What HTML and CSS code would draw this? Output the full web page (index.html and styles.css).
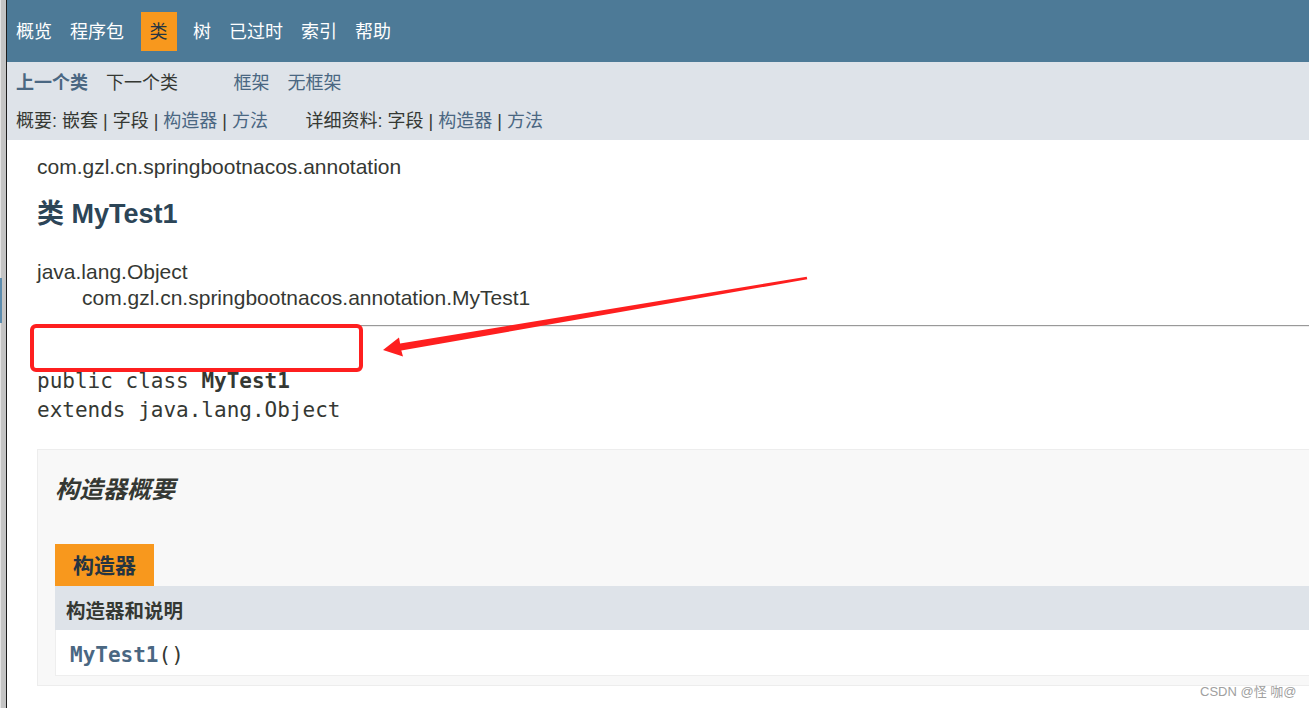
FILE: index.html
```html
<!DOCTYPE html>
<html lang="zh-CN">
<head>
<meta charset="utf-8">
<title>MyTest1</title>
<link rel="stylesheet" href="styles.css">
</head>
<body>
<div class="frame">
  <div class="edge"></div>
  <div class="page">
    <div class="topnav">
      <ul class="navlist">
        <li>概览</li>
        <li>程序包</li>
        <li class="active">类</li>
        <li>树</li>
        <li>已过时</li>
        <li>索引</li>
        <li>帮助</li>
      </ul>
    </div>
    <div class="subnav">
      <div class="subrow row1">
        <ul class="sublist">
          <li><a class="strong">上一个类</a></li>
          <li>下一个类</li>
        </ul>
        <ul class="sublist">
          <li><a>框架</a></li>
          <li><a>无框架</a></li>
        </ul>
      </div>
      <div class="subrow row2">
        <span class="group">概要:&nbsp;嵌套&nbsp;|&nbsp;字段&nbsp;|&nbsp;<a>构造器</a>&nbsp;|&nbsp;<a>方法</a></span>
        <span class="group">详细资料:&nbsp;字段&nbsp;|&nbsp;<a>构造器</a>&nbsp;|&nbsp;<a>方法</a></span>
      </div>
    </div>
    <div class="header">
      <div class="subtitle">com.gzl.cn.springbootnacos.annotation</div>
      <h2 class="title">类 MyTest1</h2>
    </div>
    <div class="content">
      <div class="inheritance">
        <div>java.lang.Object</div>
        <div class="inherit-child">com.gzl.cn.springbootnacos.annotation.MyTest1</div>
      </div>
      <hr class="rule">
      <pre class="decl">public class <b>MyTest1</b>
extends java.lang.Object</pre>
      <div class="summary">
        <h3 class="summary-title">构造器概要</h3>
        <div class="table">
          <div class="tab">构造器</div>
          <div class="thead">构造器和说明</div>
          <div class="trow"><code><a class="member">MyTest1</a>()</code></div>
        </div>
      </div>
    </div>
  </div>
</div>
<svg class="annot" width="1309" height="708" viewBox="0 0 1309 708" xmlns="http://www.w3.org/2000/svg">
  <rect x="32" y="326" width="329" height="44" rx="4" ry="4" fill="none" stroke="#fe1f1f" stroke-width="4"/>
  <polygon fill="#fe1f1f" points="383,350 403,356.5 401.3,350.6 807.3,279.2 806.7,276.8 400.1,343.4 399,337.6"/>
</svg>
<div class="watermark">CSDN @怪 咖@</div>
</body>
</html>
```

FILE: styles.css
```css
html, body {
  margin: 0;
  padding: 0;
}
body {
  width: 1309px;
  height: 708px;
  overflow: hidden;
  position: relative;
  background: #ffffff;
  color: #353833;
  font-family: "Liberation Sans", "Noto Sans CJK SC", Arial, sans-serif;
  font-size: 21px;
}
a {
  color: #4A6782;
  text-decoration: none;
}
.frame {
  display: flex;
  height: 708px;
}
.edge {
  width: 7px;
  flex: none;
  background:
    linear-gradient(to bottom, transparent 0 278px, #5c8cae 278px 323px, transparent 323px) 0 0 / 2px 100% no-repeat,
    linear-gradient(to right, #e4e4e4 0 1px, #c4c4c4 1px 6px, #1c1c1c 6px 7px);
}
.page {
  flex: 1;
  min-width: 0;
}

/* top navigation */
.topnav {
  height: 62px;
  box-sizing: border-box;
  padding-top: 12px;
  background: #4D7A97;
}
.navlist {
  display: flex;
  margin: 0;
  padding: 0;
  list-style: none;
}
.navlist li {
  padding: 2px 9px 0;
  height: 39px;
  box-sizing: border-box;
  line-height: 37px;
  font-size: 18px;
  color: #ffffff;
}
.navlist li.active {
  background: #F8981D;
  color: #253441;
  margin: 0 7.5px;
}

/* sub navigation */
.subnav {
  height: 78px;
  background: #dee3e9;
  font-size: 18px;
}
.subrow {
  display: flex;
}
.row1 {
  height: 42px;
  box-sizing: border-box;
  padding-top: 1px;
  line-height: 41px;
}
.sublist {
  display: flex;
  margin: 0 37.5px 0 0;
  padding: 0;
  list-style: none;
}
.sublist li {
  padding: 0 9px;
}
.strong {
  font-weight: bold;
}
.row2 {
  height: 34px;
  box-sizing: border-box;
  padding: 1px 0 0 9px;
  line-height: 33px;
}
.group {
  margin-right: 37.5px;
}

/* header */
.header {
  padding-left: 30px;
}
.subtitle {
  margin-top: 12px;
  line-height: 30px;
}
.title {
  margin: 14px 0 0;
  font-size: 27px;
  line-height: 36px;
  font-weight: bold;
  color: #2c4557;
}

/* content */
.content {
  padding-left: 30px;
}
.inheritance {
  margin-top: 27px;
  line-height: 26px;
}
.inherit-child {
  padding-left: 45px;
}
.rule {
  margin: 14px 0 0;
  height: 0;
  border: none;
  border-top: 1px solid #999999;
  border-bottom: 1px solid #ececec;
}
.decl {
  margin: 40px 0 0;
  font-family: "DejaVu Sans Mono", monospace;
  font-size: 21px;
  line-height: 29px;
}
.summary {
  margin-top: 24px;
  margin-right: -20px;
  border: 1px solid #ededed;
  background: #f8f8f8;
  padding: 0 0 9px 17px;
}
.summary-title {
  margin: 24px 0 0;
  font-size: 24px;
  line-height: 32px;
  font-style: italic;
  font-weight: bold;
}
.table {
  margin-top: 38px;
}
.tab {
  display: inline-block;
  vertical-align: top;
  height: 42px;
  box-sizing: border-box;
  padding: 1px 18px 0;
  line-height: 41px;
  background: #F8981D;
  color: #253441;
  font-weight: bold;
  font-size: 21px;
}
.thead {
  height: 44px;
  box-sizing: border-box;
  padding: 6px 0 0 11px;
  line-height: 38px;
  background: #dee3e9;
  font-weight: bold;
  font-size: 19.5px;
}
.trow {
  height: 46px;
  box-sizing: border-box;
  padding: 5px 0 0 14px;
  line-height: 40px;
  background: #ffffff;
  border-left: 1px solid #eeeeee;
  border-bottom: 1px solid #eeeeee;
}
.trow code {
  font-family: "DejaVu Sans Mono", monospace;
  font-size: 21px;
}
.member {
  font-weight: bold;
}

/* overlays */
.annot {
  position: absolute;
  left: 0;
  top: 0;
  pointer-events: none;
}
.watermark {
  position: absolute;
  left: 1200px;
  top: 683px;
  font-size: 13px;
  line-height: 18px;
  color: #a0a0a0;
  font-family: "Liberation Sans", "Noto Sans CJK SC", sans-serif;
  white-space: nowrap;
}
```
